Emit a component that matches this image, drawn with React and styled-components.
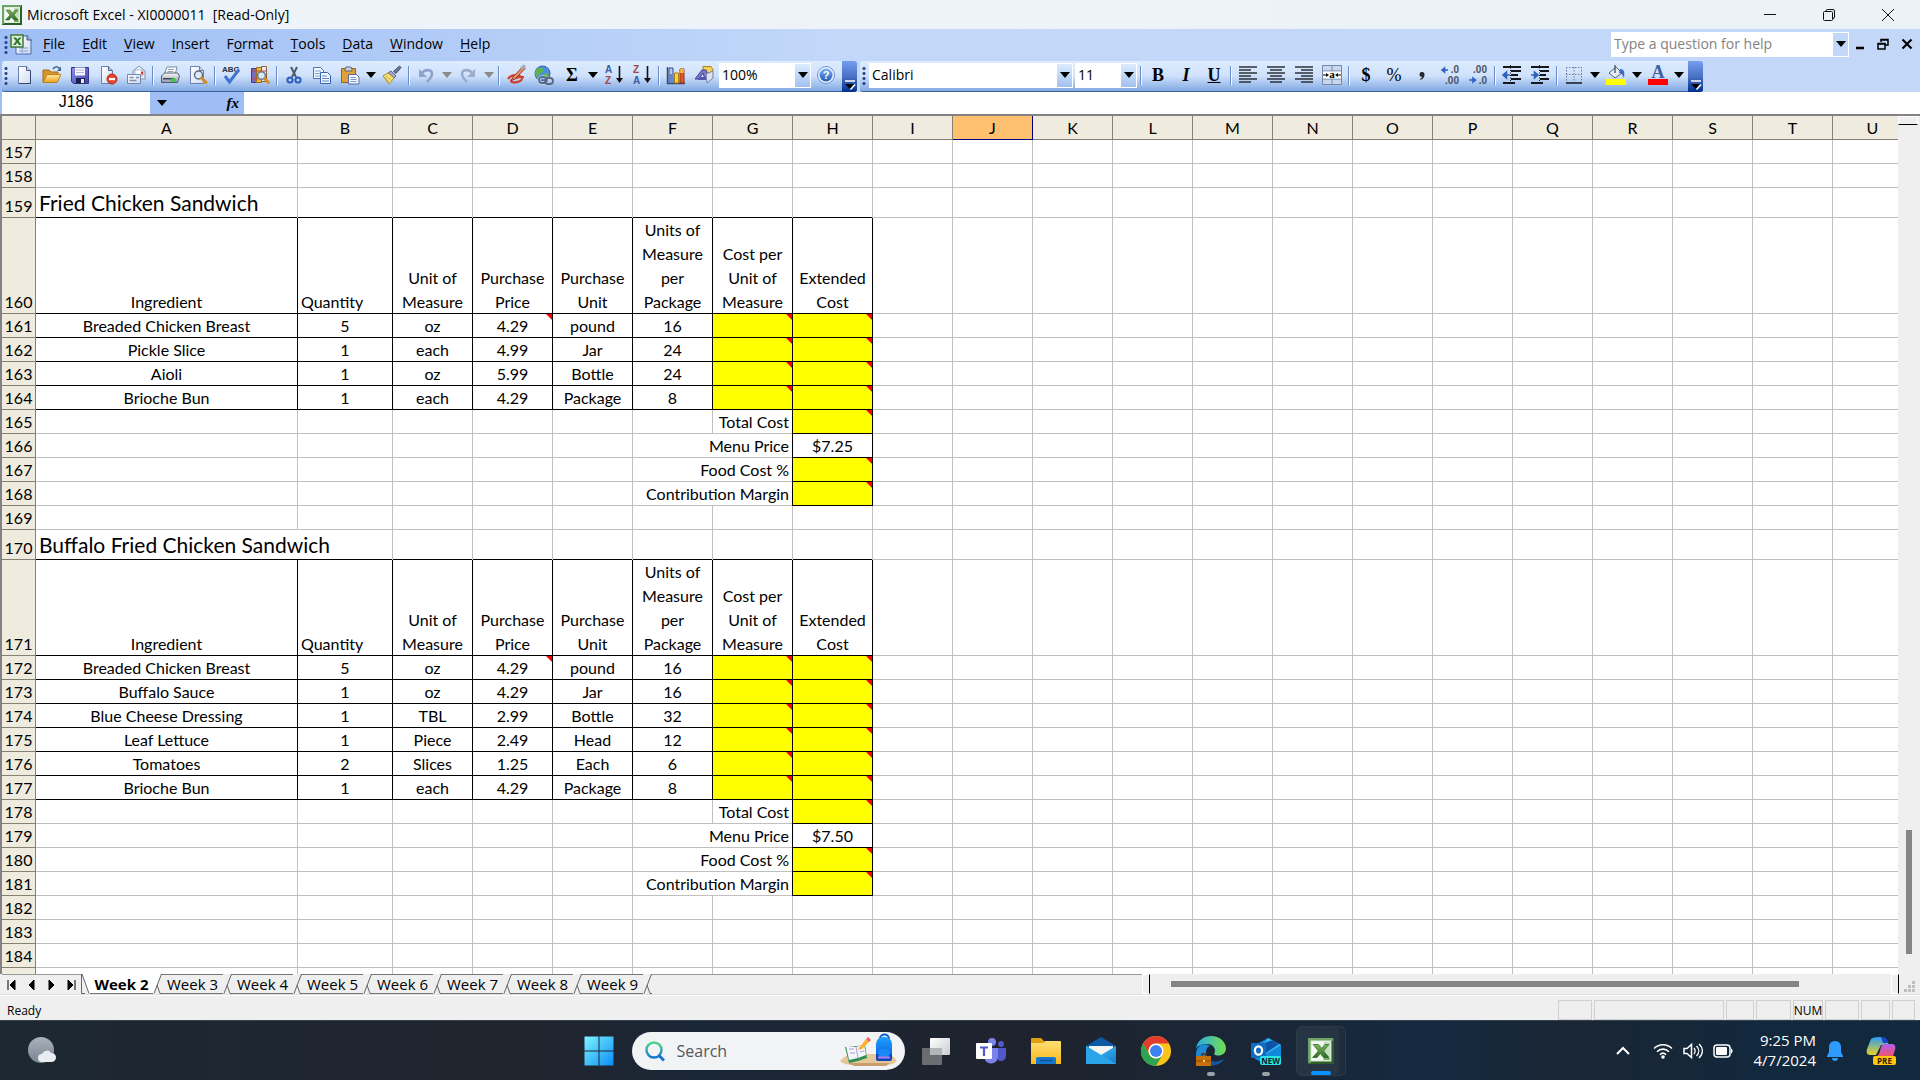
import React from "react";
import styled, { createGlobalStyle, css } from "styled-components";

const ui = `"Open Sans", "Noto Sans", sans-serif`;
const sheetFont = `Lato, "Open Sans", sans-serif`;
const serif = `"Liberation Serif", serif`;

const COLUMNS = "ABCDEFGHIJKLMNOPQRSTU".split("");
const COLUMN_WIDTHS = { A: 262, B: 95 };
const MENUS = ["File", "Edit", "View", "Insert", "Format", "Tools", "Data", "Window", "Help"];
const MENU_KEYS = { Format: 1 };
const TABS = ["Week 2", "Week 3", "Week 4", "Week 5", "Week 6", "Week 7", "Week 8", "Week 9"];
const INDICATORS = [
  { id: "macro", width: 34 },
  { id: "sum", width: 130 },
  { id: "ext", width: 28 },
  { id: "caps", width: 35 },
  { id: "num", width: 30, label: "NUM" },
  { id: "scroll", width: 34 },
  { id: "ovr", width: 29 },
  { id: "fix", width: 23 },
];

const HEADINGS = [
  "Ingredient",
  "Quantity",
  "Unit of Measure",
  "Purchase Price",
  "Purchase Unit",
  "Units of Measure per Package",
  "Cost per Unit of Measure",
  "Extended Cost",
];

// builds the rows of one recipe card: title, headings, ingredients and totals
const recipe = (title, titleSpan, items, price) => [
  { kind: "title", title, titleSpan },
  { kind: "headings" },
  ...items.map((cells, i) => ({ kind: "item", cells, note: i === 0 })),
  { kind: "total", label: "Total Cost", span: 1 },
  { kind: "total", label: "Menu Price", span: 2, value: price },
  { kind: "total", label: "Food Cost %", span: 2 },
  { kind: "total", label: "Contribution Margin", span: 2 },
];

const ROWS = [
  {},
  {},
  ...recipe(
    "Fried Chicken Sandwich",
    1,
    [
      ["Breaded Chicken Breast", "5", "oz", "4.29", "pound", "16"],
      ["Pickle Slice", "1", "each", "4.99", "Jar", "24"],
      ["Aioli", "1", "oz", "5.99", "Bottle", "24"],
      ["Brioche Bun", "1", "each", "4.29", "Package", "8"],
    ],
    "$7.25"
  ),
  {},
  ...recipe(
    "Buffalo Fried Chicken Sandwich",
    2,
    [
      ["Breaded Chicken Breast", "5", "oz", "4.29", "pound", "16"],
      ["Buffalo Sauce", "1", "oz", "4.29", "Jar", "16"],
      ["Blue Cheese Dressing", "1", "TBL", "2.99", "Bottle", "32"],
      ["Leaf Lettuce", "1", "Piece", "2.49", "Head", "12"],
      ["Tomatoes", "2", "Slices", "1.25", "Each", "6"],
      ["Brioche Bun", "1", "each", "4.29", "Package", "8"],
    ],
    "$7.50"
  ),
  {},
  {},
  {},
].map((row, i) => ({ ...row, number: 157 + i }));

/* ---------- icons ---------- */

const Svg = ({ size = 20, box = 20, children }) => (
  <svg width={size} height={size} viewBox={`0 0 ${box} ${box}`} aria-hidden="true">
    {children}
  </svg>
);

const Gradient = ({ id, from, to, x2 = 0, y2 = 1 }) => (
  <linearGradient id={id} x1="0" y1="0" x2={x2} y2={y2}>
    <stop offset="0" stopColor={from} />
    <stop offset="1" stopColor={to} />
  </linearGradient>
);

const Gradients = () => (
  <HiddenSvg aria-hidden="true">
    <defs>
      <Gradient id="paper" from="#fff" to="#cfdcf0" x2={1} />
      <Gradient id="folder" from="#ffe9a0" to="#e8a322" />
      <Gradient id="disk" from="#8d90ea" to="#3f43a8" x2={1} />
      <Gradient id="metal" from="#fafafa" to="#8e98a8" />
      <Gradient id="green" from="#7fb75a" to="#2f6a2a" />
      <Gradient id="blue" from="#7fb2f5" to="#1e56b8" />
      <Gradient id="win" from="#7df4ff" to="#0a8cf5" x2={1} />
      <Gradient id="explorer" from="#ffdf72" to="#f8b91c" />
      <Gradient id="mail" from="#45d1f5" to="#1578d4" x2={1} />
      <Gradient id="edgeTop" from="#2aa9e8" to="#72e04c" x2={1} y2={0} />
      <Gradient id="edgeLow" from="#1b8be0" to="#0c4e9c" />
      <Gradient id="moon" from="#a9b2bd" to="#7b858f" />
      <Gradient id="bag" from="#1ea0ff" to="#0757d8" />
      <Gradient id="lens" from="#4fd68a" to="#1378d4" x2={0} />
      <Gradient id="copA" from="#2b9df4" to="#e8d224" />
      <Gradient id="copB" from="#b35cf0" to="#f0566e" />
      <Gradient id="square" from="#fff" to="#c9cbce" x2={1} />
    </defs>
  </HiddenSvg>
);

const ExcelIcon = ({ size }) => (
  <Svg size={size} box={20}>
    <rect x="0.5" y="0.5" width="19" height="19" fill="#dfeedd" stroke="#35682f" />
    <path d="M1 19V1h18" fill="none" stroke="#6fa266" strokeWidth="2" />
    <path d="M19 2v17H2" fill="none" stroke="#2c5e28" strokeWidth="2" />
    <rect x="3" y="3" width="14" height="14" fill="#f4f9f2" />
    <path d="M12 3h5v14h-5z" fill="#c5dfbc" />
    <path d="M12 14l3-1 2 4h-5z" fill="#74ad5c" />
    <path d="M4 5h4l2.600 3L13 5h3l-4 5 4 5h-4l-2.500-3L7 15H3.500l4.500-5z" fill="url(#green)" stroke="#2f6a2a" strokeWidth=".6" />
  </Svg>
);

const BookIcon = () => (
  <Svg size={22} box={22}>
    <path d="M6 3h11l4 4v14H6z" fill="url(#paper)" stroke="#4a6ab0" />
    <path d="M17 2v5h5" fill="#8fa3cc" stroke="#4a5f96" />
    <path d="M9 15h9M9 18h9M12 12v8" stroke="#9db3dc" strokeWidth="1.500" />
    <rect x="1" y="2" width="12" height="12" fill="#e3f0df" stroke="#3b7a34" strokeWidth="1.500" />
    <path d="M3 4.500h3L7.500 6.500 9 4.500h2.500L8.600 8l3 4H9L7.200 9.700 5.600 12H3l3-4z" fill="#2f7a2c" />
  </Svg>
);

const icons = {
  New: (
    <>
      <path d="M4.500 1.500h8l4 4v13h-12z" fill="url(#paper)" stroke="#6a7fae" />
      <path d="M12.500 1.500v4h4" fill="#c3d2ec" stroke="#4e6290" />
      <path d="M16.500 6v12.500H5" fill="none" stroke="#34466e" />
    </>
  ),
  Open: (
    <>
      <path d="M1 17V5h6l2 2h7v4" fill="#d9962a" stroke="#a86a14" />
      <path d="M1 17.500L5 9.500h14l-4 8z" fill="url(#folder)" stroke="#b9801c" />
      <path d="M11 4c2-3 5-3 7 0" fill="none" stroke="#4b678f" strokeWidth="1.600" />
      <path d="M19 1.500V6h-4z" fill="#4b678f" />
    </>
  ),
  Save: (
    <>
      <path d="M1.500 2.500h17v16h-15l-2-2z" fill="url(#disk)" stroke="#34368e" />
      <path d="M5 2.500h10v8H5z" fill="#f5f6ff" />
      <path d="M6 5h8M6 7.500h8" stroke="#b6badf" />
      <path d="M6 13h9v5.500H6z" fill="#1d1f52" />
      <path d="M11 14h3v4h-3z" fill="#e8eaff" />
    </>
  ),
  Permission: (
    <>
      <path d="M3.500 1.500h7l4 4v13h-11z" fill="url(#paper)" stroke="#6a7fae" />
      <path d="M10.500 1.500v4h4" fill="#aebedb" stroke="#4e6290" />
      <circle cx="14" cy="14" r="5" fill="#e5482f" stroke="#b42b18" />
      <path d="M11 13h6v2.200h-6z" fill="#fff" />
    </>
  ),
  "E-mail": (
    <>
      <path d="M7 6l6-5 6 5v8H7z" fill="#eef2fb" stroke="#8090ae" />
      <path d="M9 5h8v6H9z" fill="#fff" stroke="#a9b5cf" />
      <path d="M15 6.500h2v3h-2z" fill="#d93524" />
      <path d="M1.500 9.500h13v9h-13z" fill="url(#paper)" stroke="#7284aa" />
      <path d="M3.500 12.500h4M3.500 15.500h7M10 12.500h3" stroke="#7f90b5" strokeWidth="1.400" />
    </>
  ),
  Print: (
    <>
      <path d="M7 2h10l-2 8H4z" fill="#fff" stroke="#7d8798" />
      <path d="M8 4.500h6M7.500 6.500h6" stroke="#93a1bb" />
      <path d="M1.500 11l3-3h13l2 3-2 6.500h-16z" fill="url(#metal)" stroke="#4f5b70" />
      <path d="M3 13h11v1.500H3z" fill="#3d4759" />
      <path d="M11 13.500h5v3h-5z" fill="#31d234" />
    </>
  ),
  "Print Preview": (
    <>
      <path d="M2.500 1.500h9l4 4v13h-13z" fill="url(#paper)" stroke="#6a7fae" />
      <path d="M11.500 1.500v4h4" fill="#c3d2ec" stroke="#6a7fae" />
      <circle cx="10.500" cy="10" r="4" fill="#d9ecfa" stroke="#5f6e84" strokeWidth="1.500" />
      <path d="M13.500 13l4.500 4.500" stroke="#d58c23" strokeWidth="3" strokeLinecap="round" />
    </>
  ),
  Spelling: (
    <>
      <text x="0" y="7" fontSize="8" fontWeight="700" fontFamily="Liberation Sans, sans-serif" fill="#26303e">
        ABC
      </text>
      <path d="M3 11l4.500 6L17 4.500" fill="none" stroke="#3f74d4" strokeWidth="3" />
    </>
  ),
  Research: (
    <>
      <path d="M1.500 3.500h5v14h-5z" fill="#7a6cc0" stroke="#453a86" />
      <path d="M6.500 2.500h5v15h-5z" fill="#f0b840" stroke="#9a6d13" />
      <path d="M11.500 1.500h5v15h-5z" fill="#e9eef8" stroke="#8b5c3c" />
      <path d="M2 6h14M2 14h6" stroke="#c04a3a" />
      <circle cx="11.500" cy="10.500" r="3.800" fill="#d6eaf9" stroke="#6a7688" strokeWidth="1.400" />
      <path d="M14.500 13.500l4 4" stroke="#d58c23" strokeWidth="2.800" strokeLinecap="round" />
    </>
  ),
  Cut: (
    <>
      <path d="M7 2l5 10M13 2L8 12" stroke="#4d5a6e" strokeWidth="2" />
      <circle cx="6" cy="15" r="2.600" fill="none" stroke="#2a5cc0" strokeWidth="2" />
      <circle cx="14" cy="15" r="2.600" fill="none" stroke="#2a5cc0" strokeWidth="2" />
    </>
  ),
  Copy: (
    <>
      <path d="M1.500 2.500h7l3 3v8h-10z" fill="#f2f7ff" stroke="#4a72bd" />
      <path d="M3 6h6M3 8.500h6M3 11h6" stroke="#7ea0dc" />
      <path d="M8.500 7.500h7l3 3v8h-10z" fill="#f2f7ff" stroke="#3763b4" />
      <path d="M10 11h5M10 13.500h7M10 16h7" stroke="#5f88d0" />
    </>
  ),
  Paste: (
    <>
      <path d="M1.500 3.500h14v14h-14z" fill="#e0a136" stroke="#96651a" />
      <path d="M5 4.500l1-2.500h5l1 2.500v1.500H5z" fill="#c9cfda" stroke="#5f6778" />
      <path d="M8.500 9.500h8l2.500 2.500v7H8.500z" fill="#f2f6fd" stroke="#566c9c" />
      <path d="M10.500 12.500h5M10.500 14.500h6M10.500 16.500h6" stroke="#7f94c2" />
    </>
  ),
  "Format Painter": (
    <>
      <path d="M17.500 1l1.500 1.500-5 6-2.500-2z" fill="#6c7c95" stroke="#44526a" />
      <path d="M9 6l5 5-2 2-6-5z" fill="#a99fd0" stroke="#67609a" />
      <path d="M6 8l6 5-5 6-6-8z" fill="#f7e37c" stroke="#a88c26" />
      <path d="M4 11l5 4M3 12l4 5" stroke="#cfae39" />
    </>
  ),
  Undo: (
    <>
      <path d="M6 8c3-4 10-4 10 1 0 3-2 5-5 8" fill="none" stroke="#8fa3cb" strokeWidth="2.600" />
      <path d="M3 4v8h8z" fill="#8fa3cb" />
    </>
  ),
  Redo: (
    <>
      <path d="M14 8C11 4 4 4 4 9c0 3 2 5 5 8" fill="none" stroke="#9bacd0" strokeWidth="2.600" />
      <path d="M17 4v8H9z" fill="#9bacd0" />
    </>
  ),
  Ink: (
    <>
      <path d="M2 14c3-5 12-5 14-1 1 4-11 6-11 3 0-2 6-4 13-4" fill="none" stroke="#d2402c" strokeWidth="2.200" />
      <path d="M17 1.500l2 2L9 14l-3.500 1.500L7 12z" fill="#e9916f" stroke="#8e4326" />
      <path d="M15 3.500l4-3" stroke="#a5acb8" strokeWidth="3" />
    </>
  ),
  Hyperlink: (
    <>
      <circle cx="8.500" cy="8.500" r="7.500" fill="#4d8fe3" stroke="#2b5ca8" />
      <path d="M4 3c4-1 6 0 5 3s-4 2-5 5-3-1-3-3 1-4 3-5zM10 9c3-2 5 0 5 2l-3 4c-2-1-3-4-2-6z" fill="#5cb54a" />
      <rect x="5" y="12" width="8" height="6" rx="3" fill="none" stroke="#e6ecf5" strokeWidth="3" />
      <rect x="5" y="12" width="8" height="6" rx="3" fill="none" stroke="#5a6a85" strokeWidth="1.800" />
      <rect x="11" y="13" width="8" height="6" rx="3" fill="none" stroke="#5a6a85" strokeWidth="1.800" />
    </>
  ),
  "Sort Ascending": (
    <>
      <text x="1" y="8" fontSize="10" fontWeight="700" fontFamily="Liberation Sans, sans-serif" fill="#3b5c9e">A</text>
      <text x="1" y="19" fontSize="10" fontWeight="700" fontFamily="Liberation Sans, sans-serif" fill="#a24646">Z</text>
      <path d="M15.500 1v15" stroke="#111" strokeWidth="1.600" />
      <path d="M12 13h7l-3.500 5z" fill="#111" />
    </>
  ),
  "Sort Descending": (
    <>
      <text x="1" y="8" fontSize="10" fontWeight="700" fontFamily="Liberation Sans, sans-serif" fill="#a24646">Z</text>
      <text x="1" y="19" fontSize="10" fontWeight="700" fontFamily="Liberation Sans, sans-serif" fill="#3b5c9e">A</text>
      <path d="M15.500 1v15" stroke="#111" strokeWidth="1.600" />
      <path d="M12 13h7l-3.500 5z" fill="#111" />
    </>
  ),
  "Chart Wizard": (
    <>
      <path d="M1.500 2v16.500H19" fill="none" stroke="#3b4a66" strokeWidth="1.500" />
      <path d="M3 3h4v15H3z" fill="#b9c9e8" stroke="#2b4b90" />
      <path d="M3 9h4v9H3z" fill="#5f86cf" />
      <path d="M8.500 8h4v10h-4z" fill="#ffd23b" stroke="#a9791a" />
      <path d="M14 4h4v14h-4z" fill="#e05a2e" stroke="#8f2f12" />
      <path d="M14 4h4v4h-4z" fill="#f7b03c" />
    </>
  ),
  Drawing: (
    <>
      <path d="M9 1.500h8l2 3-2 4-8-1z" fill="#f4cf5a" stroke="#a8841d" />
      <path d="M1 14L8 5h4l3 9h-4l-2-6-4 6z" fill="#7b78cf" stroke="#444193" />
      <path d="M12 9l7-3v7l-6 5z" fill="#dde3ee" stroke="#76829b" />
      <path d="M5 12h7v3H4z" fill="#5855b0" />
    </>
  ),
  Help: (
    <>
      <circle cx="10" cy="10" r="8.500" fill="#eaf2fd" stroke="#6c94d8" />
      <circle cx="10" cy="10" r="6.500" fill="url(#blue)" />
      <text x="10" y="14" fontSize="11" fontWeight="700" textAnchor="middle" fontFamily="Liberation Sans, sans-serif" fill="#fff">?</text>
    </>
  ),
  "Align Left": <path d="M1 2h18M1 5h12M1 8h18M1 11h12M1 14h18M1 17h12" stroke="#2b3038" strokeWidth="1.600" />,
  Center: <path d="M1 2h18M4 5h12M1 8h18M4 11h12M1 14h18M4 17h12" stroke="#2b3038" strokeWidth="1.600" />,
  "Align Right": <path d="M1 2h18M7 5h12M1 8h18M7 11h12M1 14h18M7 17h12" stroke="#2b3038" strokeWidth="1.600" />,
  "Merge and Center": (
    <>
      <path d="M.5 .5h19v19H.5zM.5 6h19M.5 14h19M10 .5V6M10 14v5.500" fill="#c9d6ec" stroke="#7488ae" />
      <path d="M1 6.500h18v7H1z" fill="#fff" />
      <text x="10" y="13" fontSize="11" fontWeight="700" textAnchor="middle" fontFamily="Liberation Serif, serif">a</text>
      <path d="M1 10h4M19 10h-4" stroke="#111" />
      <path d="M4 8l3 2-3 2zM16 8l-3 2 3 2z" fill="#111" />
    </>
  ),
  "Comma Style": (
    <path d="M10 7a2.400 2.400 0 0 1 2.500 2.800c0 2.500-1.500 4.200-4 5.200l-.4-.9c1.300-.6 1.900-1.300 1.900-2.300-1.500 0-2.500-1-2.500-2.400A2.400 2.400 0 0 1 10 7z" fill="#23272e" />
  ),
  "Increase Decimal": (
    <>
      <path d="M8 5H4M4.500 3L2 5l2.500 2z" stroke="#2e62c0" strokeWidth="1.600" fill="#2e62c0" />
      <text x="19" y="8" fontSize="10" fontWeight="700" textAnchor="end" fontFamily="Liberation Sans, sans-serif" fill="#4a5260">.0</text>
      <text x="19" y="19" fontSize="10" fontWeight="700" textAnchor="end" fontFamily="Liberation Sans, sans-serif" fill="#4a5260">.00</text>
    </>
  ),
  "Decrease Decimal": (
    <>
      <text x="19" y="8" fontSize="10" fontWeight="700" textAnchor="end" fontFamily="Liberation Sans, sans-serif" fill="#4a5260">.00</text>
      <path d="M1 15h4M5 13l2.500 2L5 17z" stroke="#2e62c0" strokeWidth="1.600" fill="#2e62c0" />
      <text x="19" y="19" fontSize="10" fontWeight="700" textAnchor="end" fontFamily="Liberation Sans, sans-serif" fill="#4a5260">.0</text>
    </>
  ),
  "Decrease Indent": (
    <>
      <path d="M1 2h18M9 6h10M9 10h7M9 14h10M1 18h12" stroke="#15181d" strokeWidth="2" />
      <path d="M8 10H4M4.500 7L1 10l3.500 3z" stroke="#2e62c0" strokeWidth="1.600" fill="#2e62c0" />
      <path d="M8.500 0v20" stroke="#15181d" strokeDasharray="1 1.500" />
    </>
  ),
  "Increase Indent": (
    <>
      <path d="M1 2h18M10 6h9M10 10h6M10 14h9M1 18h12" stroke="#15181d" strokeWidth="2" />
      <path d="M1 10h4M4.500 7L8 10l-3.500 3z" stroke="#2e62c0" strokeWidth="1.600" fill="#2e62c0" />
      <path d="M9.500 0v20" stroke="#15181d" strokeDasharray="1 1.500" />
    </>
  ),
  Borders: (
    <>
      <path d="M2 2.500h16M2 9.500h16M2.500 2v15M10 2v15M17.500 2v15" stroke="#6f7c96" strokeDasharray="1.500 1.500" />
      <path d="M2 18h16" stroke="#3b4252" strokeWidth="2" />
    </>
  ),
  "Fill Color": (
    <>
      <path d="M3 8l7-6 6 6-7 5z" fill="#e6ebf5" stroke="#56617a" />
      <path d="M9 0v8" stroke="#56617a" strokeWidth="1.500" />
      <path d="M14 4c4 0 5 3 4 9-1-2-2-5-5-5z" fill="#3e6cc4" />
      <path d="M0 14h20v6H0z" fill="#ff0" />
    </>
  ),
  "Font Color": (
    <>
      <text x="10" y="13" fontSize="18" fontWeight="700" textAnchor="middle" fontFamily="Liberation Serif, serif" fill="#3f5f9f">A</text>
      <path d="M0 14h20v6H0z" fill="#f00" />
    </>
  ),
};

/* items for the taskbar, each drawn in a 30 unit box */
const apps = [
  {
    name: "Task View",
    art: (
      <>
        <rect x="1" y="12" width="20" height="17" rx="1" fill="#6a6c70" />
        <rect x="9" y="2" width="20" height="17" rx="1" fill="url(#square)" />
        <path d="M9 12h12v7H9z" fill="#b4b5b7" />
      </>
    ),
  },
  {
    name: "Teams",
    art: (
      <>
        <circle cx="25" cy="8" r="3" fill="#5059c9" />
        <path d="M20 12h10v8a5 5 0 0 1-8 4z" fill="#5059c9" />
        <circle cx="16" cy="6" r="4" fill="#7b83eb" />
        <path d="M9 12h13v9a7 7 0 0 1-13 3z" fill="#7b83eb" />
        <rect x="0" y="7" width="16" height="16" rx="1" fill="#fff" />
        <path d="M4 11.500h8M8 11.500V20" stroke="#5059c9" strokeWidth="2.200" />
      </>
    ),
  },
  {
    name: "File Explorer",
    art: (
      <>
        <path d="M0 3a1 1 0 0 1 1-1h9l3 3v5H0z" fill="#e0a010" />
        <path d="M0 7h12l2-2h15a1 1 0 0 1 1 1v22H0z" fill="url(#explorer)" />
        <path d="M5 28v-5a2 2 0 0 1 2-2h16a2 2 0 0 1 2 2v5z" fill="#1477cf" />
        <path d="M9 24.500h12" stroke="#0b4f96" strokeWidth="1.500" />
      </>
    ),
  },
  {
    name: "Mail",
    art: (
      <>
        <path d="M0 10L15 1l15 9v3H0z" fill="#0c59a4" />
        <path d="M3 10h24v9H3z" fill="#f4f4f4" />
        <path d="M0 10l15 9 15-9v18H0z" fill="url(#mail)" />
        <path d="M0 10l30 18H0z" fill="#2ba5ea" />
      </>
    ),
  },
  {
    name: "Chrome",
    art: (
      <>
        <circle cx="15" cy="15" r="15" fill="#fbc31c" />
        <path d="M15 0a15 15 0 0 1 13 7.500H15a7.500 7.500 0 0 0-6.500 11.300L2 7.500A15 15 0 0 1 15 0z" fill="#e33b2e" />
        <path d="M2 7.500l6.500 11.300a7.500 7.500 0 0 0 13 0L15 30A15 15 0 0 1 2 7.500z" fill="#2da44f" />
        <circle cx="15" cy="15" r="7.500" fill="#fff" />
        <circle cx="15" cy="15" r="6" fill="#3c82f3" />
      </>
    ),
  },
  {
    name: "Edge",
    running: true,
    art: (
      <>
        <path d="M10 12c-4 10 6 18 18 11-5 9-20 9-25 0z" fill="url(#edgeLow)" />
        <path d="M0 13C2-4 28-4 30 12c0 8-9 9-12 6 3-5-1-10-7-10C6 8 1 10 0 13z" fill="url(#edgeTop)" />
        <path d="M0 19C0 9 8 6 14 10c-4 1-5 6-3 12H1z" fill="#1c8ad9" />
        <path d="M6 20v-2h4v2" fill="none" stroke="#5b3104" strokeWidth="1.500" />
        <rect x="0" y="20" width="15" height="10" fill="#c5700d" />
        <path d="M0 25h15" stroke="#8a4a06" />
        <path d="M7 24h2v2H7z" fill="#ffd75a" />
      </>
    ),
  },
  {
    name: "Outlook",
    running: true,
    art: (
      <>
        <path d="M4 9L17 2l13 7v14L17 29 4 23z" fill="#1389dc" />
        <path d="M17 2l13 7-18 11V8z" fill="#35b7f3" />
        <path d="M8 9L22 4l6 4-13 9z" fill="#0d54a8" />
        <rect x="0" y="7" width="15" height="15" rx="1" fill="#0f6cc0" />
        <ellipse cx="7.500" cy="14.500" rx="3.600" ry="4.200" fill="none" stroke="#fff" strokeWidth="2.200" />
        <rect x="9" y="20" width="21" height="9" rx="2" fill="#29e3e6" />
        <text x="19.500" y="27.500" fontSize="8" fontWeight="700" textAnchor="middle" fontFamily="Open Sans, sans-serif" fill="#06222b">NEW</text>
      </>
    ),
  },
];

const ToolIcon = ({ name }) => <Svg>{icons[name]}</Svg>;

const Caret = ({ faded }) => (
  <svg width="10" height="6" viewBox="0 0 10 6" aria-hidden="true">
    <path d="M0 0h10L5 6z" fill={faded ? "#8a8a8a" : "#000"} />
  </svg>
);

const TabSlash = ({ first, active }) => (
  <svg width="9" height="20" viewBox="0 0 9 20" aria-hidden="true">
    {first ? (
      <>
        <path d="M1 0l7 20h1V0z" fill="#fff" />
        <path d="M1 0l7 19.500M.5 0v19.500H4" stroke="#666" fill="none" />
      </>
    ) : (
      <>
        {active && <path d="M0 0h8L1 20H0z" fill="#fff" />}
        <path d="M8.500 0L1 19.500M4 11l3 8.500M8 .5h1M7 19.500h2" stroke="#666" fill="none" />
      </>
    )}
  </svg>
);

/* ---------- toolbars ---------- */

const Tool = ({ name, children, menu, faded }) => (
  <>
    <ToolButton type="button" aria-label={name}>
      {children || <ToolIcon name={name} />}
    </ToolButton>
    {menu && (
      <MenuArrow type="button" aria-label={`${name} options`}>
        <Caret faded={faded} />
      </MenuArrow>
    )}
  </>
);

const Combo = ({ label, value, width }) => (
  <ComboBox $width={width}>
    <ComboSelect aria-label={label} defaultValue={value}>
      <option>{value}</option>
    </ComboSelect>
    <ComboArrow>
      <Caret />
    </ComboArrow>
  </ComboBox>
);

const ToolbarEnd = () => (
  <EndCap type="button" aria-label="Toolbar Options">
    <svg width="10" height="10" viewBox="0 0 10 10" aria-hidden="true">
      <path d="M0 1h10" stroke="#fff" strokeWidth="1.500" />
      <path d="M0 4h9L5 9z" fill="#000" />
      <path d="M10 4.500L5.500 9.500" stroke="#fff" strokeWidth="1.500" />
    </svg>
  </EndCap>
);

const StandardToolbar = () => (
  <Toolbar aria-label="Standard">
    <Grip />
    <Tool name="New" />
    <Tool name="Open" />
    <Tool name="Save" />
    <Tool name="Permission" />
    <Tool name="E-mail" />
    <Separator />
    <Tool name="Print" />
    <Tool name="Print Preview" />
    <Separator />
    <Tool name="Spelling" />
    <Tool name="Research" />
    <Separator />
    <Tool name="Cut" />
    <Tool name="Copy" />
    <Tool name="Paste" menu />
    <Tool name="Format Painter" />
    <Separator />
    <Tool name="Undo" menu faded />
    <Tool name="Redo" menu faded />
    <Separator />
    <Tool name="Ink" />
    <Tool name="Hyperlink" />
    <Tool name="AutoSum" menu>
      <Glyph>Σ</Glyph>
    </Tool>
    <Tool name="Sort Ascending" />
    <Tool name="Sort Descending" />
    <Separator />
    <Tool name="Chart Wizard" />
    <Tool name="Drawing" />
    <Combo label="Zoom" value="100%" width={92} />
    <Tool name="Help" />
    <ToolbarEnd />
  </Toolbar>
);

const FormattingToolbar = () => (
  <Toolbar aria-label="Formatting">
    <Grip />
    <Combo label="Font" value="Calibri" width={204} />
    <Combo label="Font Size" value="11" width={62} />
    <Separator />
    <Tool name="Bold">
      <Glyph>B</Glyph>
    </Tool>
    <Tool name="Italic">
      <Glyph as="em">I</Glyph>
    </Tool>
    <Tool name="Underline">
      <Glyph as="u">U</Glyph>
    </Tool>
    <Separator />
    <Tool name="Align Left" />
    <Tool name="Center" />
    <Tool name="Align Right" />
    <Tool name="Merge and Center" />
    <Separator />
    <Tool name="Currency Style">
      <Glyph>$</Glyph>
    </Tool>
    <Tool name="Percent Style">
      <Glyph $light>%</Glyph>
    </Tool>
    <Tool name="Comma Style" />
    <Tool name="Increase Decimal" />
    <Tool name="Decrease Decimal" />
    <Separator />
    <Tool name="Decrease Indent" />
    <Tool name="Increase Indent" />
    <Separator />
    <Tool name="Borders" menu />
    <Tool name="Fill Color" menu />
    <Tool name="Font Color" menu />
    <ToolbarEnd />
  </Toolbar>
);

const MenuLabel = ({ text }) => {
  const at = MENU_KEYS[text] || 0;
  return (
    <>
      {text.slice(0, at)}
      <u>{text[at]}</u>
      {text.slice(at + 1)}
    </>
  );
};

/* ---------- worksheet ---------- */

const blanks = (from, to, props = {}) =>
  COLUMNS.slice(from, to).map((col) => <Cell key={col} {...props} />);

const RowCells = ({ row }) => {
  switch (row.kind) {
    case "title":
      return (
        <>
          <Cell $align="left" $large $under colSpan={row.titleSpan}>
            {row.title}
          </Cell>
          {blanks(row.titleSpan, 8, { $under: true })}
          {blanks(8)}
        </>
      );
    case "headings":
      return (
        <>
          {HEADINGS.map((text) => (
            <Cell key={text} $boxed $align={text === "Quantity" ? "left" : "center"}>
              {text}
            </Cell>
          ))}
          {blanks(8)}
        </>
      );
    case "item":
      return (
        <>
          {row.cells.map((text, i) => (
            <Cell key={COLUMNS[i]} $boxed $note={row.note && i === 3}>
              {text}
            </Cell>
          ))}
          <Cell $boxed $answer $note />
          <Cell $boxed $answer $note />
          {blanks(8)}
        </>
      );
    case "total":
      return (
        <>
          {blanks(0, 7 - row.span)}
          <Cell $align="right" $edge colSpan={row.span}>
            {row.label}
          </Cell>
          <Cell $boxed $answer={!row.value} $note={!row.value}>
            {row.value}
          </Cell>
          {blanks(8)}
        </>
      );
    default:
      return blanks(0);
  }
};

const Worksheet = () => (
  <Grid>
    <colgroup>
      <Column $width={34} />
      {COLUMNS.map((col) => (
        <Column key={col} $width={COLUMN_WIDTHS[col] || 80} />
      ))}
    </colgroup>
    <thead>
      <tr>
        <HeadCell aria-label="Select All" />
        {COLUMNS.map((col) => (
          <HeadCell key={col} scope="col" $selected={col === "J"}>
            {col}
          </HeadCell>
        ))}
      </tr>
    </thead>
    <tbody>
      {ROWS.map((row) => (
        <Row key={row.number} $kind={row.kind}>
          <HeadCell scope="row">{row.number}</HeadCell>
          <RowCells row={row} />
        </Row>
      ))}
      {/* the row that only peeks out above the tabs */}
      <Row>
        <HeadCell />
        {blanks(0)}
      </Row>
    </tbody>
  </Grid>
);

const SheetTabs = () => (
  <TabStrip>
    <TabNav>
      {["M2 1v10M9 1L4 6l5 5z", "M8 1L3 6l5 5z", "M4 1l5 5-5 5z", "M10 1v10M3 1l5 5-5 5z"].map((d, i) => (
        <NavButton key={d} type="button" aria-label={["First", "Previous", "Next", "Last"][i]}>
          <svg width="12" height="12" viewBox="0 0 12 12" aria-hidden="true">
            <path d={d} stroke="#000" />
          </svg>
        </NavButton>
      ))}
    </TabNav>
    <TabSlash first />
    {TABS.map((tab, i) => (
      <React.Fragment key={tab}>
        <Tab type="button" $active={i === 0}>
          {tab}
        </Tab>
        <TabSlash active={i === 0} />
      </React.Fragment>
    ))}
    <TabFiller />
    <Splitter />
    <HorizontalTrack>
      <HorizontalThumb />
    </HorizontalTrack>
    <Splitter />
    <SizeGrip>
      <svg width="12" height="12" viewBox="0 0 12 12" aria-hidden="true">
        <path d="M8 0h3v3H8zM4 4h3v3H4zM8 4h3v3H8zM0 8h3v3H0zM4 8h3v3H4zM8 8h3v3H8z" fill="#bfbfbf" />
      </svg>
    </SizeGrip>
  </TabStrip>
);

/* ---------- desktop taskbar ---------- */

const Taskbar = () => (
  <TaskbarRow>
    <TaskbarLeft>
      <TrayButton type="button" aria-label="Weather">
        <Svg size={28} box={28}>
          <circle cx="13" cy="13" r="13" fill="url(#moon)" />
          <path d="M14 25a4 4 0 0 1 0-8 5 5 0 0 1 9-1 4.500 4.500 0 0 1 1 9z" fill="#e9edf1" />
        </Svg>
      </TrayButton>
    </TaskbarLeft>
    <TaskbarCenter>
      <AppButton type="button" aria-label="Start">
        <Svg size={30} box={30}>
          <path d="M.5 .5h14v14h-14zM15.500 .5h14v14h-14zM.5 15.500h14v14h-14zM15.500 15.500h14v14h-14z" fill="url(#win)" />
        </Svg>
      </AppButton>
      <SearchPill>
        <Svg size={20} box={20}>
          <circle cx="9" cy="9" r="7.500" fill="none" stroke="url(#lens)" strokeWidth="2.400" />
          <path d="M14 14.500l5 5" stroke="#1370cf" strokeWidth="2.800" />
        </Svg>
        <SearchInput aria-label="Search" placeholder="Search" />
        <svg width="58" height="34" viewBox="0 0 58 34" aria-hidden="true">
          <path d="M0 27c4-4 8-7 14-7h32c5 0 8 3 11 7-3 3-8 4-12 4H14c-6 0-11-1-14-4z" fill="#e6c79c" />
          <path d="M8 29h42l-4 3H14z" fill="#c99d6b" />
          <path d="M5 13l12-1 8-1 2 13-9 3-9 2z" fill="#2f8f4f" />
          <path d="M6 12l10 1 8-3 2 11-8 3-9 2z" fill="#f5f3fb" />
          <path d="M16 13l2 11M9 15l5 0M10 19l5 0M19 14l4-1M20 18l4-1" stroke="#a9a4c8" fill="none" />
          <path d="M19 14l7-9 3 3-7 7-4 1z" fill="#ffb02e" />
          <path d="M26 5l2-2 3 3-2 2z" fill="#f0625c" />
          <path d="M40 5c0-6 9-6 9 0" fill="none" stroke="#0b5fd0" strokeWidth="2" />
          <rect x="36" y="3" width="16" height="24" rx="7" fill="url(#bag)" />
          <path d="M36 20h16v5a2 2 0 0 1-2 2H38a2 2 0 0 1-2-2z" fill="#0a48b8" />
          <rect x="38" y="15" width="12" height="8" rx="4" fill="#1b86f7" />
          <path d="M38 23.500h12" stroke="#b67cf2" strokeWidth="2" />
        </svg>
      </SearchPill>
      {apps.map(({ name, art, running }) => (
        <AppButton key={name} type="button" aria-label={name} $running={running}>
          <Svg size={30} box={30}>
            {art}
          </Svg>
        </AppButton>
      ))}
      <AppButton type="button" aria-label="Excel" $current>
        <ExcelIcon size={26} />
      </AppButton>
    </TaskbarCenter>
    <Tray>
      <TrayButton type="button" aria-label="Hidden icons">
        <svg width="14" height="9" viewBox="0 0 14 9" aria-hidden="true">
          <path d="M1 8l6-6 6 6" fill="none" stroke="#fff" strokeWidth="2" />
        </svg>
      </TrayButton>
      <StatusIcons type="button" aria-label="Network, volume, battery">
        <svg width="20" height="16" viewBox="0 0 20 16" aria-hidden="true">
          <path d="M1 5.500c5-5 13-5 18 0M4 8.700c3.500-3.500 8.500-3.500 12 0M7 11.700c2-2 4-2 6 0" fill="none" stroke="#fff" strokeWidth="1.600" />
          <circle cx="10" cy="14" r="1.800" fill="#fff" />
        </svg>
        <svg width="20" height="16" viewBox="0 0 20 16" aria-hidden="true">
          <path d="M1 5.500h3L8.500 1.500v13L4 10.500H1z" fill="none" stroke="#fff" strokeWidth="1.500" />
          <path d="M11 5c1.500 2 1.500 4 0 6M13.500 3c3 3 3 7 0 10M16 1c4.500 4 4.500 10 0 14" fill="none" stroke="#fff" strokeWidth="1.300" />
        </svg>
        <svg width="20" height="14" viewBox="0 0 20 14" aria-hidden="true">
          <rect x="1" y="1" width="16" height="12" rx="3" fill="none" stroke="#fff" strokeWidth="1.500" />
          <rect x="3" y="3" width="11" height="8" rx="1" fill="#fff" />
          <path d="M18 4.500c2 0 2 5 0 5z" fill="#fff" />
        </svg>
      </StatusIcons>
      <Clock>
        <span>9:25 PM</span>
        <span>4/7/2024</span>
      </Clock>
      <TrayButton type="button" aria-label="Notifications">
        <svg width="16" height="20" viewBox="0 0 16 20" aria-hidden="true">
          <path d="M8 0c4 0 6 3 6 6v5l2 4v1H0v-1l2-4V6c0-3 2-6 6-6z" fill="#2f9bff" />
          <path d="M5 17h6c0 2-1.500 3-3 3s-3-1-3-3z" fill="#2f9bff" />
        </svg>
      </TrayButton>
      <CopilotButton type="button" aria-label="Copilot">
        <svg width="30" height="30" viewBox="0 0 30 30" aria-hidden="true">
          <path d="M5 3c2-2 11-3 15 0 2 2 2 5 3 6h-8l-5 10H4c-3 0-4-3-3-6z" fill="url(#copA)" />
          <path d="M15 1c4 0 6 1 7 6h-5z" fill="#1746c9" />
          <path d="M18 8h8c3 0 4 3 3 6l-2 6H11c3-2 3-6 4-9 1-2 2-3 3-3z" fill="url(#copB)" />
          <rect x="7" y="20" width="23" height="9" rx="2" fill="#ffc60a" />
          <text x="18.500" y="27.500" fontSize="8" fontWeight="700" textAnchor="middle" fontFamily="Open Sans, sans-serif" fill="#2a2100">PRE</text>
        </svg>
      </CopilotButton>
    </Tray>
  </TaskbarRow>
);

class App extends React.Component {
  render() {
    return (
      <Desktop>
        <GlobalStyle />
        <Gradients />
        <TitleBar>
          <ExcelIcon size={20} />
          <Title>Microsoft Excel - XI0000011&nbsp; [Read-Only]</Title>
          <WindowButtons>
            <WindowButton type="button" aria-label="Minimize">
              <svg width="12" height="12" viewBox="0 0 12 12" aria-hidden="true">
                <path d="M0 5.500h12" stroke="#111" />
              </svg>
            </WindowButton>
            <WindowButton type="button" aria-label="Restore">
              <svg width="12" height="12" viewBox="0 0 12 12" aria-hidden="true">
                <path d="M3 2.500V2a1.500 1.500 0 0 1 1.500-1.500H10A1.500 1.500 0 0 1 11.500 2v6A1.500 1.500 0 0 1 10 9.500" fill="none" stroke="#111" />
                <rect x="0.500" y="2.500" width="9" height="9" rx="1" fill="none" stroke="#111" />
              </svg>
            </WindowButton>
            <WindowButton type="button" aria-label="Close">
              <svg width="12" height="12" viewBox="0 0 12 12" aria-hidden="true">
                <path d="M0 0l12 12M12 0L0 12" stroke="#111" />
              </svg>
            </WindowButton>
          </WindowButtons>
        </TitleBar>

        <MenuBar>
          <Grip />
          <BookIcon />
          <MenuList>
            {MENUS.map((text) => (
              <MenuButton key={text} type="button">
                <MenuLabel text={text} />
              </MenuButton>
            ))}
          </MenuList>
          <AskBox>
            <AskInput aria-label="Help question" placeholder="Type a question for help" />
            <AskButton type="button" aria-label="Recent questions">
              <Caret />
            </AskButton>
          </AskBox>
          <BookButtons>
            <BookButton type="button" aria-label="Minimize workbook">
              <svg width="12" height="12" viewBox="0 0 12 12" aria-hidden="true">
                <path d="M1 10h8" stroke="#000" strokeWidth="2.500" />
              </svg>
            </BookButton>
            <BookButton type="button" aria-label="Restore workbook">
              <svg width="12" height="12" viewBox="0 0 12 12" aria-hidden="true">
                <path d="M3 4V1.500h7V7H7M3 2h7M0 5.500h7V11H0zM0 6h7" fill="none" stroke="#000" strokeWidth="1.500" />
              </svg>
            </BookButton>
            <BookButton type="button" aria-label="Close workbook">
              <svg width="12" height="12" viewBox="0 0 12 12" aria-hidden="true">
                <path d="M1.500 1.500l9 9M10.500 1.500l-9 9" stroke="#000" strokeWidth="2.200" />
              </svg>
            </BookButton>
          </BookButtons>
        </MenuBar>

        <ToolbarRow>
          <StandardToolbar />
          <FormattingToolbar />
        </ToolbarRow>

        <FormulaBar>
          <NameBox aria-label="Name Box" defaultValue="J186" />
          <NameArrow type="button" aria-label="Names">
            <Caret />
          </NameArrow>
          <FunctionButton type="button" aria-label="Insert Function">
            fx
          </FunctionButton>
          <FormulaInput aria-label="Formula" />
        </FormulaBar>

        <SheetArea>
          <GridWindow>
            <Worksheet />
          </GridWindow>
          <VerticalBar>
            <TopSplitter />
            <VerticalTrack>
              <VerticalThumb />
            </VerticalTrack>
          </VerticalBar>
        </SheetArea>
        <SheetTabs />

        <StatusBar>
          <StatusText>Ready</StatusText>
          {INDICATORS.map(({ id, width, label }) => (
            <Indicator key={id} $width={width}>
              {label}
            </Indicator>
          ))}
        </StatusBar>
        <Taskbar />
      </Desktop>
    );
  }
}

/* ---------- styles ---------- */

const GlobalStyle = createGlobalStyle`
  * {
    box-sizing: border-box;
  }

  body {
    margin: 0;
    font-family: ${ui};
    font-size: 14px;
    color: #000;
  }

  button, input, select {
    margin: 0;
    padding: 0;
    border: 0;
    border-radius: 0;
    background: none;
    color: inherit;
    font: inherit;
    outline: none;
  }

  svg {
    display: block;
    flex: none;
    overflow: visible;
  }
`;

const HiddenSvg = styled.svg`
  position: absolute;
  width: 0;
  height: 0;
`;

const center = css`
  display: flex;
  align-items: center;
  justify-content: center;
`;

const Desktop = styled.div`
  display: flex;
  flex-direction: column;
  height: 100vh;
  overflow: hidden;
  background: #efefef;
`;

const TitleBar = styled.header`
  display: flex;
  align-items: center;
  flex: none;
  height: 29px;
  padding-left: 2px;
  background: linear-gradient(90deg, #eff3fa, #ebf3f7);
`;

const Title = styled.span`
  flex: 1;
  padding-left: 5px;
`;

const WindowButtons = styled.div`
  display: flex;
  padding-right: 3px;
`;

const WindowButton = styled.button`
  ${center}
  width: 59px;
  height: 28px;
`;

const MenuBar = styled.nav`
  display: flex;
  align-items: center;
  flex: none;
  height: 32px;
  padding: 0 2px 2px;
  background: linear-gradient(90deg, #9ebef5, #c3d8f9 44%);
`;

const Grip = styled.span`
  flex: none;
  width: 8px;
  height: 19px;
  background: radial-gradient(circle, #27418a 1px, transparent 2px) 0 0 / 8px 5px repeat-y;
`;

const MenuList = styled.div`
  display: flex;
  flex: 1;
  padding-left: 2px;
`;

const MenuButton = styled.button`
  padding: 0 8px 0 9px;
  line-height: 24px;

  u {
    text-underline-offset: 2px;
  }
`;

const AskBox = styled.div`
  display: flex;
  width: 238px;
  height: 25px;
  border: 1px solid #fff;
  background: #fff;
`;

const AskInput = styled.input`
  flex: 1;
  min-width: 0;
  padding: 0 0 2px 2px;

  &::placeholder {
    color: #848284;
    opacity: 1;
  }
`;

const AskButton = styled.button`
  ${center}
  width: 15px;
  background: #c3d8f9;
`;

const BookButtons = styled.div`
  display: flex;
`;

const BookButton = styled.button`
  ${center}
  width: 23px;
  height: 24px;
`;

const ToolbarRow = styled.div`
  display: flex;
  flex: none;
  gap: 3px;
  padding-left: 2px;
  background: linear-gradient(90deg, #9ebef5, #c3d8f9 44%);
`;

const Toolbar = styled.div.attrs({ role: "toolbar" })`
  display: flex;
  align-items: center;
  height: 31px;
  padding-bottom: 2px;
  border-bottom: 1px solid #3b619c;
  border-radius: 3px;
  background: linear-gradient(#ddecfe, #cfe1fb 50%, #81a9e2);
`;

const ToolButton = styled.button`
  ${center}
  width: 28px;
  height: 28px;
`;

const MenuArrow = styled.button`
  ${center}
  width: 14px;
  height: 28px;
`;

const Glyph = styled.b`
  font-family: ${serif};
  font-size: 18px;
  font-weight: ${({ $light }) => ($light ? 400 : 700)};
  line-height: 22px;
`;

const Separator = styled.span`
  width: 2px;
  height: 19px;
  margin: 0 2px;
  border-left: 1px solid #6a8ccb;
  border-right: 1px solid #f1f9ff;
`;

const ComboBox = styled.div`
  position: relative;
  width: ${({ $width }) => $width}px;
  height: 25px;
  margin: 0 1px;
  background: #fff;
`;

const ComboSelect = styled.select`
  appearance: none;
  width: 100%;
  height: 100%;
  padding: 0 18px 2px 3px;
`;

const ComboArrow = styled.span`
  ${center}
  position: absolute;
  top: 1px;
  right: 1px;
  bottom: 1px;
  width: 15px;
  background: linear-gradient(#ddecfe, #a2c1f0);
  pointer-events: none;
`;

const EndCap = styled.button`
  align-self: stretch;
  display: flex;
  align-items: flex-end;
  justify-content: center;
  width: 15px;
  margin: 0 0 -3px 2px;
  padding-bottom: 2px;
  border-radius: 0 3px 3px 0;
  background: linear-gradient(#759df0, #4a72c4 50%, #00308f);
`;

const FormulaBar = styled.div`
  display: flex;
  flex: none;
  height: 22px;
  padding-left: 2px;
  background: #9ebef5;
`;

const NameBox = styled.input`
  width: 148px;
  background: #fff;
  font-family: "Liberation Sans", sans-serif;
  font-size: 16px;
  line-height: 18px;
  padding-bottom: 3px;
  text-align: center;
`;

const NameArrow = styled.button`
  ${center}
  width: 24px;
`;

const FunctionButton = styled.button`
  width: 70px;
  padding-right: 5px;
  font-family: ${serif};
  font-size: 15px;
  font-style: italic;
  font-weight: 700;
  text-align: right;
`;

const FormulaInput = styled.input`
  flex: 1;
  background: #fff;
`;

const SheetArea = styled.main`
  display: flex;
  flex: 1;
  min-height: 0;
  border-top: 2px solid #848284;
  border-left: 2px solid #848284;
`;

const GridWindow = styled.div`
  flex: 1;
  min-width: 0;
  overflow: hidden;
  background: #fff;
`;

const Grid = styled.table`
  width: 0;
  table-layout: fixed;
  border-spacing: 0;
  font-family: ${sheetFont};
  font-size: 16px;
  line-height: 24px;
`;

const Column = styled.col`
  width: ${({ $width }) => $width}px;
`;

const rowHeights = { title: 30, headings: 96 };

const Row = styled.tr`
  height: ${({ $kind }) => rowHeights[$kind] || 24}px;
`;

const HeadCell = styled.th`
  height: 24px;
  padding: 0;
  border: solid ${({ $selected }) => ($selected ? "#000080" : "#848270")};
  border-width: 0 1px 1px 0;
  background: ${({ $selected }) => ($selected ? "#ffc06f" : "#efebde")};
  font-weight: 400;
  line-height: 22px;
  vertical-align: bottom;
`;

// the cell rules are inset shadows, so that a row is a whole number of text lines
const Cell = styled.td`
  --right: #c0c0c0;
  --bottom: #c0c0c0;
  position: relative;
  padding: 0 4px 0 3px;
  box-shadow: inset -1px 0 var(--right), inset 0 -1px var(--bottom);
  text-align: ${({ $align }) => $align || "center"};
  vertical-align: bottom;

  ${({ $boxed }) => $boxed && css`
    --right: #000;
    --bottom: #000;
  `}

  ${({ $under }) => $under && css`
    --bottom: #000;
  `}

  ${({ $edge }) => $edge && css`
    --right: #000;
    white-space: nowrap;
  `}

  ${({ $large }) => $large && css`
    padding-bottom: 1px;
    font-size: 21px;
    line-height: 28px;
    white-space: nowrap;
  `}

  ${({ $answer }) => $answer && css`
    background: #ff0;
  `}

  ${({ $note }) => $note && css`
    &::after {
      content: "";
      position: absolute;
      top: 0;
      right: 1px;
      border-top: 6px solid #f00;
      border-left: 6px solid transparent;
    }
  `}
`;

const VerticalBar = styled.div`
  display: flex;
  flex-direction: column;
  flex: none;
  width: 22px;
  background: #efefef;
`;

const TopSplitter = styled.div`
  height: 9px;
  margin-right: 2px;
  border: 1px solid #fff;
  border-bottom: 1px solid #000;
`;

const VerticalTrack = styled.div`
  display: flex;
  flex: 1;
  flex-direction: column;
  justify-content: flex-end;
  padding: 0 8px 20px;
`;

const VerticalThumb = styled.div`
  height: 15%;
  background: #858585;
`;

const TabStrip = styled.div`
  display: flex;
  flex: none;
  height: 21px;
  padding-left: 2px;
  border-bottom: 1px solid #dedede;
`;

const TabNav = styled.div`
  display: flex;
  width: 79px;
  border-top: 1px solid #999;
`;

const NavButton = styled.button`
  ${center}
  flex: 1;
`;

const Tab = styled.button`
  width: ${({ $active }) => ($active ? 63 : 61)}px;
  border: solid #777;
  border-width: ${({ $active }) => ($active ? "0 0 1px" : "1px 0")};
  background: ${({ $active }) => ($active ? "#fff" : "none")};
  font-size: 15px;
  font-weight: ${({ $active }) => ($active ? 700 : 400)};
  line-height: 18px;
  white-space: nowrap;
`;

const TabFiller = styled.div`
  flex: 490 1 0;
  border-top: 1px solid #999;
`;

const Splitter = styled.div`
  flex: none;
  width: 8px;
  border: 1px solid #fff;
  border-right: 1px solid #000;
`;

const HorizontalTrack = styled.div`
  display: flex;
  align-items: center;
  flex: 742 1 0;
  min-width: 0;
`;

const HorizontalThumb = styled.div`
  flex: 1;
  height: 6px;
  margin: 0 92px 0 21px;
  background: #858585;
`;

const SizeGrip = styled.div`
  display: flex;
  align-items: flex-end;
  justify-content: center;
  width: 21px;
  padding-bottom: 1px;
`;

const StatusBar = styled.footer`
  display: flex;
  align-items: center;
  flex: none;
  gap: 2px;
  height: 25px;
  padding: 4px 5px 0 7px;
  border-top: 1px solid #fff;
  font-size: 12px;
`;

const StatusText = styled.span`
  flex: 1;
`;

const Indicator = styled.span`
  ${center}
  width: ${({ $width }) => $width}px;
  height: 20px;
  border: 1px solid #d0d0d0;
`;

const TaskbarRow = styled.div`
  display: grid;
  grid-template-columns: 1fr auto 1fr;
  align-items: center;
  flex: none;
  height: 60px;
  border-top: 1px solid #33424f;
  background: linear-gradient(90deg, #1d2832, #20242d 28%, #1a2737 36%, #1f232d 53%, #15293f 75%, #1a2633 82%, #12283d 92%);
  color: #fff;
`;

const TaskbarLeft = styled.div`
  display: flex;
  padding-left: 28px;
`;

const TaskbarCenter = styled.div`
  display: flex;
  align-items: center;
`;

const AppButton = styled.button`
  ${center}
  position: relative;
  width: 55px;
  height: 50px;

  ${({ $current }) => $current && css`
    width: 50px;
    margin: 0 3px 0 2px;
    border: 1px solid #2c3b49;
    border-radius: 6px;
    background: #263443;
    box-shadow: inset -6px 0 #1f2d3c;
  `}

  ${({ $running, $current }) => ($running || $current) && css`
    &::after {
      content: "";
      position: absolute;
      bottom: 0;
      width: ${$current ? 20 : 8}px;
      height: 4px;
      border-radius: 2px;
      background: ${$current ? "#0a93ff" : "#9ba1a8"};
    }
  `}
`;

const SearchPill = styled.label`
  display: flex;
  align-items: center;
  width: 273px;
  height: 38px;
  margin: 0 4px 0 5px;
  padding: 0 7px 0 13px;
  border-radius: 19px;
  background: #f2f3f5;
`;

const SearchInput = styled.input`
  flex: 1;
  min-width: 0;
  padding-left: 12px;
  font-size: 16px;

  &::placeholder {
    color: #55585d;
    opacity: 1;
  }
`;

const Tray = styled.div`
  display: flex;
  align-items: center;
  justify-content: flex-end;
  gap: 11px;
  padding-right: 24px;
`;

const TrayButton = styled.button`
  ${center}
`;

const StatusIcons = styled.button`
  display: flex;
  align-items: center;
  gap: 10px;
  padding: 0 10px 0 12px;
`;

const Clock = styled.time`
  display: flex;
  flex-direction: column;
  align-items: flex-end;
  padding-bottom: 2px;
  font-size: 15px;
  line-height: 20px;
`;

const CopilotButton = styled(TrayButton)`
  margin-left: 12px;
`;

export default App;
